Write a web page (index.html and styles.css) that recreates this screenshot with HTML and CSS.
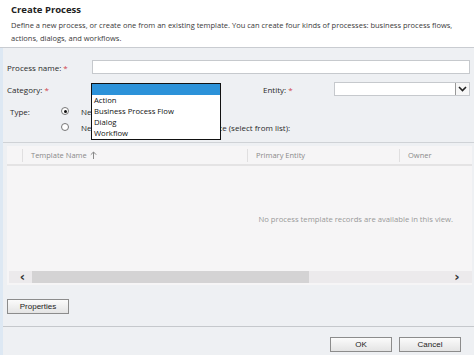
FILE: index.html
```html
<!DOCTYPE html>
<html>
<head>
<meta charset="utf-8">
<link rel="stylesheet" href="styles.css">
</head>
<body>
<div class="page">
  <header class="header">
    <h1 class="title">Create Process</h1>
    <p class="desc">Define a new process, or create one from an existing template. You can create four kinds of processes: business process flows, actions, dialogs, and workflows.</p>
  </header>
  <section class="form">
    <div class="row">
      <label class="label">Process name: <span class="req">*</span></label>
      <div class="input"></div>
    </div>
    <div class="row row2">
      <label class="label">Category: <span class="req">*</span></label>
      <div class="cat-spacer"></div>
      <label class="label entity-label">Entity: <span class="req">*</span></label>
      <div class="select">
        <span class="select-btn"><svg width="9" height="6" viewBox="0 0 9 6"><path d="M1 1 L4.5 4.5 L8 1" fill="none" stroke="#222" stroke-width="1.6"/></svg></span>
      </div>
      <ul class="dropdown">
        <li class="dd-sel"></li>
        <li>Action</li>
        <li>Business Process Flow</li>
        <li>Dialog</li>
        <li>Workflow</li>
      </ul>
    </div>
    <div class="type">
      <div class="type-row">
        <span class="label type-label">Type:</span>
        <span class="radio checked"></span>
        <span class="rtext">New blank process</span>
      </div>
      <div class="type-row">
        <span class="label type-label"></span>
        <span class="radio"></span>
        <span class="rtext">New process from an existing template (select from list):</span>
      </div>
    </div>
  </section>
  <section class="grid">
    <div class="grid-head">
      <span class="sep"></span>
      <span class="col c1">Template Name <svg width="7" height="8" viewBox="0 0 7 8"><path d="M3.5 8 V1 M0.8 3.7 L3.5 1 L6.2 3.7" fill="none" stroke="#888" stroke-width="1"/></svg></span>
      <span class="sep"></span>
      <span class="col c2">Primary Entity</span>
      <span class="sep"></span>
      <span class="col c3">Owner</span>
    </div>
    <div class="grid-body">
      <p class="empty">No process template records are available in this view.</p>
    </div>
    <div class="hscroll">
      <span class="arr arr-l">&lsaquo;</span>
      <span class="thumb"></span>
      <span class="track"></span>
      <span class="arr arr-r">&rsaquo;</span>
    </div>
  </section>
  <div class="props">
    <button class="btn">Properties</button>
  </div>
  <footer class="footer">
    <button class="btn btn-wide">OK</button>
    <button class="btn btn-wide">Cancel</button>
  </footer>
</div>
</body>
</html>
```
FILE: styles.css
```css
* { box-sizing: border-box; }
html, body { margin: 0; padding: 0; }
body {
  width: 474px;
  height: 355px;
  overflow: hidden;
  background: #eef0f3;
  font-family: "Open Sans", "Noto Sans", sans-serif;
  color: #333;
}
.page {
  position: relative;
  height: 355px;
  border-left: 3px solid #dde8f3;
}
.header {
  background: #fff;
  height: 48px;
  padding: 4px 8px 0 11px;
  border-bottom: 1px solid #c9ccd1;
  margin-left: -3px;
}
.title {
  margin: 0;
  font-size: 9.5px;
  font-weight: 700;
  line-height: 12px;
  color: #222;
}
.desc {
  margin: 3px 0 0;
  font-size: 7.5px;
  line-height: 13px;
  color: #3a3a3a;
}
.form {
  padding: 12px 4px 0 4px;
  height: 95px;
  border-bottom: 1px solid #cfd2d6;
}
.row {
  display: flex;
  align-items: center;
  height: 14px;
}
.row2 {
  margin-top: 8px;
  position: relative;
}
.label {
  font-size: 8px;
  color: #2a2a2a;
  width: 85px;
  flex: none;
}
.req { color: #d0424a; }
.input {
  width: 378px;
  height: 14px;
  background: #fff;
  border: 1px solid #c6c9cd;
}
.cat-spacer { width: 171px; flex: none; }
.entity-label { width: 71px; }
.select {
  width: 136px;
  height: 14px;
  background: #fff;
  border: 1px solid #c6c9cd;
  display: flex;
  justify-content: flex-end;
}
.select-btn {
  width: 14px;
  height: 12px;
  border-left: 1px solid #999;
  display: flex;
  align-items: center;
  justify-content: center;
  background: #f7f7f7;
}
.dropdown {
  position: absolute;
  left: 84px;
  top: 1px;
  width: 130px;
  height: 57px;
  margin: 0;
  padding: 0;
  list-style: none;
  background: #fff;
  border: 1px solid #111;
  z-index: 5;
}
.dropdown li {
  font-size: 7.7px;
  line-height: 11px;
  color: #111;
  padding-left: 2px;
  height: 11px;
}
.dropdown li.dd-sel {
  background: #2c92d9;
  height: 11px;
}
.type { margin-top: 7px; }
.type-row {
  display: flex;
  align-items: center;
  height: 16px;
}
.type-label { width: 54px; padding-left: 3px; }
.radio {
  width: 8px;
  height: 8px;
  border: 1px solid #777;
  border-radius: 50%;
  background: #fff;
  flex: none;
  position: relative;
}
.radio.checked::after {
  content: "";
  position: absolute;
  left: 1.5px;
  top: 1.5px;
  width: 3px;
  height: 3px;
  border-radius: 50%;
  background: #111;
}
.rtext {
  margin-left: 12px;
  font-size: 8px;
  color: #2a2a2a;
}
.grid {
  margin: 3px 2px 0 4px;
  height: 139px;
  background: #f6f5f6;
  display: flex;
  flex-direction: column;
}
.grid-head {
  height: 20px;
  flex: none;
  display: flex;
  align-items: center;
  border-bottom: 2px solid #e4e3e4;
  font-size: 7.5px;
  color: #8a8a8a;
}
.sep {
  width: 1px;
  height: 13px;
  background: #e0dfe0;
  flex: none;
}
.grid-head .sep:first-child { margin-left: 15px; }
.col { padding-left: 8px; }
.c1 { width: 224px; display: flex; align-items: center; gap: 3px; }
.c2 { width: 151px; }
.c3 { flex: 1; }
.grid-body {
  flex: 1;
  display: flex;
  align-items: center;
  justify-content: flex-end;
}
.empty {
  margin: 0 19px 0 0;
  font-size: 7.7px;
  color: #999;
}
.hscroll {
  height: 12px;
  flex: none;
  margin: 0 0 2px 2px;
  display: flex;
  align-items: center;
  background: #eceaec;
}
.arr {
  font-size: 13px;
  font-weight: 700;
  line-height: 12px;
  color: #333;
  font-family: "DejaVu Sans", sans-serif;
}
.arr-l { width: 23px; text-align: right; padding-right: 7px; }
.arr-r { width: 30px; text-align: center; }
.thumb {
  width: 277px;
  height: 12px;
  background: #d4d3d4;
}
.track { flex: 1; }
.props {
  display: flex;
  align-items: flex-start;
  padding: 14px 0 0 4px;
  height: 42px;
  border-bottom: 1px solid #c5c8cc;
}
.btn {
  display: block;
  font-family: "Liberation Sans", Arial, sans-serif;
  font-size: 8px;
  color: #222;
  height: 15px;
  padding: 0;
  width: 62px;
  border: 1px solid #8c8c8c;
  background: linear-gradient(#fbfbfb, #e4e4e4);
  border-radius: 0;
}
.footer {
  display: flex;
  justify-content: flex-end;
  gap: 7px;
  padding: 10px 13px 0 0;
}
```
